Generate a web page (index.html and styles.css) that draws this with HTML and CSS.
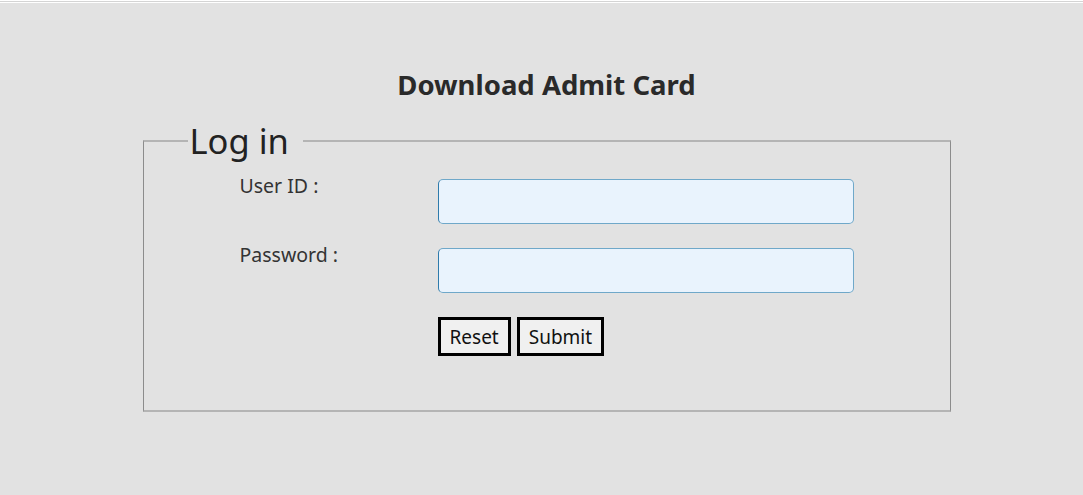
FILE: index.html
```html
<!DOCTYPE html>
<html lang="en">
<head>
    <meta charset="UTF-8">
    <title>Download Admit Card</title>
    <link rel="stylesheet" href="styles.css">
</head>
<body>
    <div class="topbar"></div>
    <div class="page">
        <h2 class="title">Download Admit Card</h2>
        <form onsubmit="return false;">
            <fieldset class="login">
                <legend>Log in</legend>
                <div class="fields">
                    <div class="row">
                        <label for="userid">User ID :</label>
                        <input type="text" id="userid">
                    </div>
                    <div class="row">
                        <label for="password">Password :</label>
                        <input type="password" id="password">
                    </div>
                    <div class="row">
                        <span></span>
                        <div class="buttons">
                            <input type="reset" value="Reset">
                            <input type="submit" value="Submit">
                        </div>
                    </div>
                </div>
            </fieldset>
        </form>
    </div>
</body>
</html>
```

FILE: styles.css
```css
/* Basic Styling */
body {
    font-family: "Noto Sans", "Open Sans", sans-serif;
    background-color: #e2e2e2;
    color: #222;
    margin: 0;
    padding: 0;
}

.topbar {
    height: 1px;
    background-color: #fff;
    border-bottom: 1px solid #d4d4d4;
    box-shadow: 0 1px 0 #fff;
}

.page {
    width: 808px;
    margin: 0 auto;
    padding-left: 10px;
}

.title {
    text-align: center;
    font-size: 27.5px;
    font-weight: bold;
    color: #2a2a2a;
    margin: 64px 0 18px;
}

.login {
    margin: 0;
    padding: 0;
    border-top: 2px solid #b4b4b4;
    border-bottom: 2px solid #b4b4b4;
    border-left: 1px solid #8c8c8c;
    border-right: 1px solid #8c8c8c;
}

.login legend {
    font-size: 34.5px;
    color: #222;
    margin-left: 44px;
    padding: 0 14px 0 2px;
    line-height: 40px;
}

.fields {
    padding: 18px 0 54px 96px;
}

.row {
    display: grid;
    grid-template-columns: 198px 416px;
    margin-bottom: 24px;
}

.row:last-child {
    margin-bottom: 0;
}

.row label {
    font-size: 19.5px;
    color: #333;
    line-height: 20px;
    margin-top: -3px;
}

.row input[type="text"],
.row input[type="password"] {
    height: 45px;
    box-sizing: border-box;
    border: 1px solid #6fa8c9;
    border-left-color: #2f7bab;
    border-radius: 5px;
    background-color: #e9f3fd;
    margin: 0;
}

.buttons {
    display: flex;
    gap: 6px;
}

.buttons input {
    font-family: inherit;
    font-size: 19px;
    height: 39px;
    padding: 0 9px;
    background-color: #f0f0f0;
    border: 3px solid #000;
    color: #111;
    margin: 0;
}
```
